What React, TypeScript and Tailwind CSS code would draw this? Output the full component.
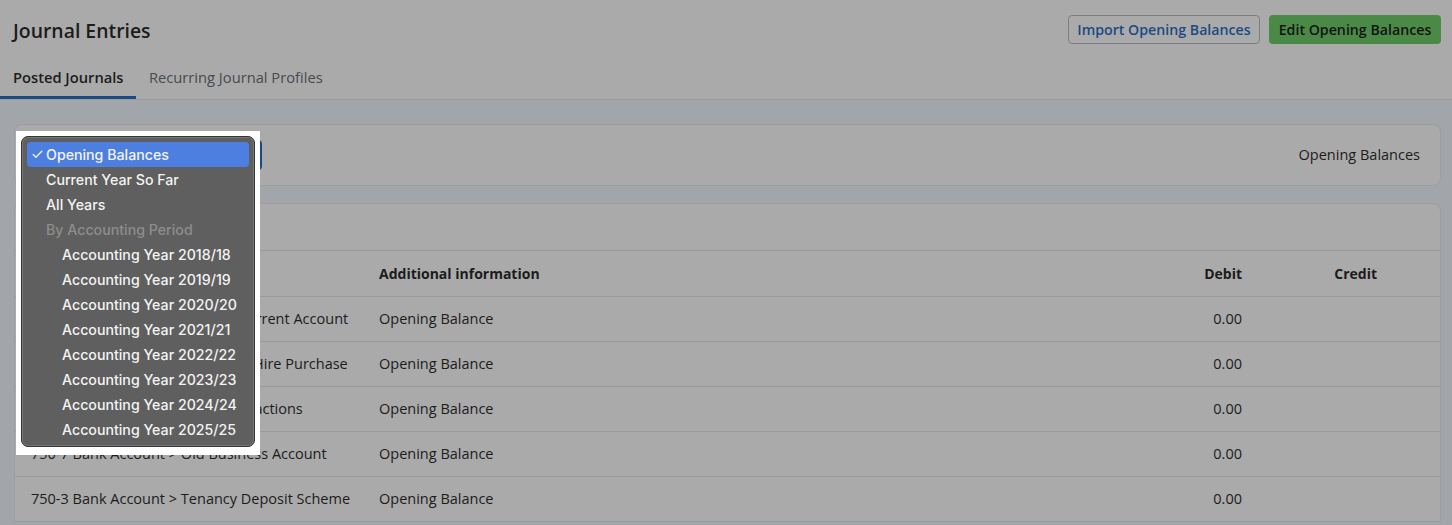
import { Check } from 'lucide-react';

const rows = [
  { account: '750-1 Bank Account > Primary Current Account', info: 'Opening Balance', debit: '0.00' },
  { account: '750-5 Bank Account > Motor Car Hire Purchase', info: 'Opening Balance', debit: '0.00' },
  { account: '750-2 Bank Account > Card Transactions', info: 'Opening Balance', debit: '0.00' },
  { account: '750-7 Bank Account > Old Business Account', info: 'Opening Balance', debit: '0.00' },
  { account: '750-3 Bank Account > Tenancy Deposit Scheme', info: 'Opening Balance', debit: '0.00' },
];

const years = ['2018/18', '2019/19', '2020/20', '2021/21', '2022/22', '2023/23', '2024/24', '2025/25'];

// native select popup, open over the dimmed page
const PeriodMenu = () => (
  <div className="absolute left-[16px] top-[131px] w-[244px] h-[324px] bg-white p-[5px]">
    <div className="h-[311px] rounded-[7px] border border-[#353535] bg-[#5f5f5f] px-[5px] py-[5px] shadow-[inset_0_0_0_1px_#777] font-['Inter',sans-serif] text-[14.2px] font-medium text-[#f3f3f3]">
      <div className="flex h-[25px] items-center rounded-[4px] bg-[#4d7fe1] pl-[4px]">
        <Check className="h-[13px] w-[13px] mr-[2px]" strokeWidth={2.4} />
        <span>Opening Balances</span>
      </div>
      <div className="flex h-[25px] items-center pl-[19px]">Current Year So Far</div>
      <div className="flex h-[25px] items-center pl-[19px]">All Years</div>
      <div className="flex h-[25px] items-center pl-[19px] text-[#8d8d8d]">By Accounting Period</div>
      {years.map((y) => (
        <div key={y} className="flex h-[25px] items-center pl-[35px]">
          Accounting Year {y}
        </div>
      ))}
    </div>
  </div>
);

const App = () => {
  return (
    <div className="relative h-[525px] overflow-hidden bg-[#a2a5aa] font-['Open_Sans',sans-serif] text-[#1c1c1c]">
      <div className="bg-[#aaaaaa] border-b border-[#9a9ca0]">
        <div className="flex items-start justify-between pl-[13px] pr-[11px] pt-[15px]">
          <h1 className="mt-[4px] text-[19.4px] leading-[24px] font-semibold">Journal Entries</h1>
          <div className="flex gap-[9px]">
            <button className="h-[29px] w-[192px] rounded-[4px] border border-[#7b7e84] text-[14.2px] font-semibold text-[#1b4a83]">
              Import Opening Balances
            </button>
            <button className="h-[29px] w-[172px] rounded-[4px] bg-[#4a8a46] text-[14.2px] font-semibold text-[#141414]">
              Edit Opening Balances
            </button>
          </div>
        </div>
        <div className="mt-[23px] flex text-[14.7px] leading-[20px]">
          <div className="w-[136px] border-b-[3px] border-[#1b4a83] pl-[13px] pb-[9px] font-semibold">Posted Journals</div>
          <div className="pl-[13px] pb-[9px] text-[#474b50]">Recurring Journal Profiles</div>
        </div>
      </div>

      <div className="pl-[14px] pr-[11px] pt-[24px]">
        <div className="flex h-[62px] items-center justify-between rounded-[8px] border border-[#9c9ea2] bg-[#aaaaaa] pl-[7px] pr-[20px]">
          <div className="h-[30px] w-[240px] rounded-[4px] border-2 border-[#1b4a83]" />
          <span className="text-[14.5px]">Opening Balances</span>
        </div>

        <div className="mt-[17px] rounded-t-[8px] border border-b-0 border-[#9c9ea2] bg-[#aaaaaa]">
          <div className="h-[47px] border-b border-[#9a9a9a]" />
          <table className="w-full table-fixed text-[14.5px]">
            <colgroup>
              <col className="w-[348px]" />
              <col />
              <col className="w-[150px]" />
              <col className="w-[135px]" />
              <col className="w-[47px]" />
            </colgroup>
            <thead>
              <tr className="h-[45px] border-b border-[#9a9a9a] text-[14px] font-semibold">
                <th className="px-4 text-left" />
                <th className="px-4 text-left">Additional information</th>
                <th className="px-4 text-right">Debit</th>
                <th className="px-4 text-right">Credit</th>
                <th />
              </tr>
            </thead>
            <tbody>
              {rows.map((r) => (
                <tr key={r.account} className="h-[45px] border-b border-[#9a9a9a]">
                  <td className="px-4 whitespace-nowrap">{r.account}</td>
                  <td className="px-4">{r.info}</td>
                  <td className="px-4 text-right">{r.debit}</td>
                  <td className="px-4 text-right" />
                  <td />
                </tr>
              ))}
            </tbody>
          </table>
        </div>
      </div>

      <PeriodMenu />
    </div>
  );
};

export default App;
